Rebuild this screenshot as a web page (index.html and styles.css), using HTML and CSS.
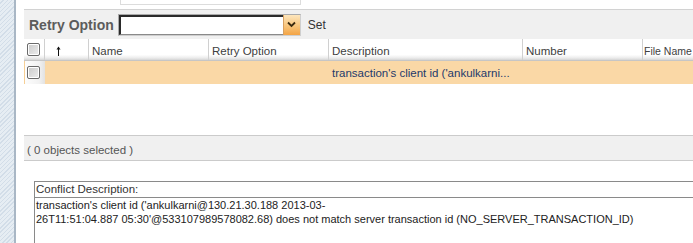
FILE: index.html
```html
<!DOCTYPE html>
<html>
<head>
<meta charset="utf-8">
<link rel="stylesheet" href="styles.css">
</head>
<body>
<div class="strip"></div>
<div class="main">
  <div class="topbox"></div>
  <div class="toolbar">
    <span class="tb-title">Retry Option</span>
    <div class="combo">
      <div class="combo-field"></div>
      <div class="combo-btn">
        <svg width="9" height="7" viewBox="0 0 9 7"><path d="M1 1.5 L4.5 5 L8 1.5" fill="none" stroke="#3a2a10" stroke-width="1.8"/></svg>
      </div>
    </div>
    <span class="tb-set">Set</span>
  </div>
  <div class="grid-head">
    <div class="c c-cb"><span class="cbox"></span></div>
    <div class="c c-arrow">
      <svg width="5" height="10" viewBox="0 0 5 10"><path d="M2.5 1 V10" stroke="#111" stroke-width="1"/><path d="M0.5 3.5 L2.5 0.5 L4.5 3.5 Z" fill="#111"/></svg>
    </div>
    <div class="c c-name">Name</div>
    <div class="c c-retry">Retry Option</div>
    <div class="c c-desc">Description</div>
    <div class="c c-num">Number</div>
    <div class="c c-file">File Name</div>
  </div>
  <div class="grid-row">
    <div class="c c-cb"><span class="cbox"></span></div>
    <div class="c c-arrow"></div>
    <div class="c c-name"></div>
    <div class="c c-retry"></div>
    <div class="c c-desc">transaction's client id ('ankulkarni...</div>
    <div class="c c-num"></div>
    <div class="c c-file"></div>
  </div>
  <div class="status">( 0 objects selected )</div>
  <div class="conflict">
    <div class="conflict-title">Conflict Description:</div>
    <div class="conflict-body">transaction's client id ('ankulkarni@130.21.30.188 2013-03-<br>26T11:51:04.887 05:30'@533107989578082.68) does not match server transaction id (NO_SERVER_TRANSACTION_ID)</div>
  </div>
</div>
</body>
</html>
```
FILE: styles.css
```css
html, body {
  margin: 0;
  padding: 0;
}
body {
  display: flex;
  height: 243px;
  overflow: hidden;
  background: #fff;
  font-family: "Liberation Sans", Arial, sans-serif;
  font-size: 11.5px;
  color: #333;
}
.strip {
  flex: none;
  width: 14px;
  background: repeating-linear-gradient(135deg, #e6edf3 0 2px, #d2dde8 2px 3px);
  border-right: 2px solid #a9b7c5;
}
.main {
  flex: 1;
  min-width: 0;
  padding-left: 8px;
  overflow: hidden;
  display: flex;
  flex-direction: column;
}
.topbox {
  margin-left: 96px;
  width: 179px;
  height: 4px;
  border: 1px solid #dcdcdc;
  border-top: none;
  margin-bottom: 4px;
  flex: none;
}
.toolbar {
  flex: none;
  height: 29px;
  border-top: 1px solid #d2d2d2;
  background: #f0f0f0;
  display: flex;
  align-items: center;
  width: 900px;
}
.tb-title {
  margin-left: 5px;
  font-weight: bold;
  font-size: 14px;
  color: #5c5c5c;
}
.combo {
  margin-left: 4px;
  width: 183px;
  height: 22px;
  display: flex;
  box-sizing: border-box;
  border: 1px solid #cfcfcf;
  border-top-color: #aaa;
  border-left-color: #aaa;
  background: #fff;
}
.combo-field {
  flex: 1;
  border-top: 2px solid #2a2a2a;
  border-left: 2px solid #2a2a2a;
  border-bottom: 1px solid #8a8a8a;
  background: #fff;
}
.combo-btn {
  width: 16px;
  background: linear-gradient(#fde6bd, #f8c47a 55%, #f3a445);
  border-left: 1px solid #d8a060;
  display: flex;
  align-items: center;
  justify-content: center;
}
.tb-set {
  margin-left: 7px;
  font-size: 12px;
  color: #333;
}
.grid-head, .grid-row {
  flex: none;
  display: flex;
  width: 900px;
}
.grid-head {
  height: 21px;
  background: linear-gradient(#fff 0, #fff 75%, #ececec 90%, #d4d4d4 100%);
  border-bottom: 1px solid #c6c6c6;
  color: #404040;
}
.grid-row {
  height: 23px;
  background: #fad8a6;
  color: #1e3a6b;
}
.c {
  flex: none;
  box-sizing: border-box;
  display: flex;
  align-items: center;
  padding-left: 3px;
  white-space: nowrap;
  overflow: hidden;
}
.grid-head .c {
  border-right: 1px solid #d0d0d0;
  padding-top: 3px;
}
.c-cb { width: 21px; padding-left: 3px; }
.c-arrow { width: 44px; padding-left: 11px; }
.c-name { width: 120px; }
.c-retry { width: 120px; }
.c-desc { width: 194px; }
.c-num { width: 120px; }
.c-file { width: 120px; padding-left: 2px; }
.grid-head .c-file { font-size: 10.5px; padding-left: 1px; }
.grid-head .c-cb { padding-top: 0; }
.grid-row .c-cb {
  background: linear-gradient(to right, #fdfdfd, #f2f2f2 70%, #e2e2e2);
  border-left: 1px solid #f6cf95;
  padding-left: 2px;
}
.cbox {
  display: block;
  width: 11px;
  height: 11px;
  border: 1px solid #6a6a6a;
  border-radius: 2px;
  background: linear-gradient(135deg, #c9c9c9, #eeeeee);
  box-shadow: inset 0 0 0 1px #fff;
}
.status {
  flex: none;
  margin-top: 51px;
  border-top: 1px solid #cbcbcb;
  border-bottom: 1px solid #cbcbcb;
  background: #f0f0f0;
  padding-left: 3px;
  display: flex;
  align-items: center;
  padding-top: 4px;
  height: 20px;
  font-size: 11.5px;
  color: #555;
  width: 900px;
}
.conflict {
  flex: none;
  margin-top: 20px;
  margin-left: 10px;
  width: 900px;
  border: 1px solid #8a8a8a;
  border-right: none;
  height: 80px;
}
.conflict-title {
  height: 15px;
  line-height: 15px;
  border-bottom: 1px solid #8a8a8a;
  padding-left: 1px;
  color: #333;
  font-size: 11.5px;
}
.conflict-body {
  padding-left: 1px;
  line-height: 14px;
  font-size: 11px;
  color: #222;
  white-space: nowrap;
}
```
